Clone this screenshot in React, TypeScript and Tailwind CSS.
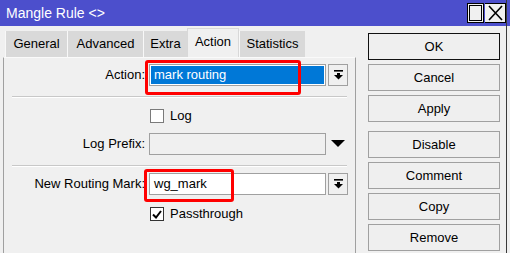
import React from "react";

const DropIcon = () => (
  <svg width="9" height="10" viewBox="0 0 9 10">
    <rect x="0" y="0" width="9" height="1.6" fill="#000" />
    <rect x="3" y="3" width="3" height="2" fill="#000" />
    <polygon points="0,5 9,5 4.5,9.5" fill="#000" />
  </svg>
);

const DropBtn = () => (
  <div className="w-[20px] h-[22px] ml-[2px] border border-[#a0a0a0] bg-[#f0f0f0] flex items-center justify-center">
    <DropIcon />
  </div>
);

const Tab = ({ label, w, active }: { label: string; w: number; active?: boolean }) => (
  <div
    style={{ width: w }}
    className={
      active
        ? "h-[29px] bg-[#f0f0f0] border-t border-l border-r border-[#d8d8d8] flex items-center justify-center pb-[2px]"
        : "h-[26px] bg-[#d9d9d9] border-l border-[#f8f8f8] flex items-center justify-center"
    }
  >
    {label}
  </div>
);

const Btn = ({ label, primary, mt }: { label: string; primary?: boolean; mt?: string }) => (
  <div
    className={
      "h-[27px] w-[132px] flex items-center justify-center bg-[#efefef] " +
      (primary ? "border border-[#111]" : "border border-[#a0a0a0]") +
      (mt ? " " + mt : "")
    }
  >
    {label}
  </div>
);

export default function App() {
  return (
    <div
      className="relative w-[510px] h-[253px] overflow-hidden bg-[#f0f0f0] text-[13px] text-black"
      style={{ fontFamily: '"Liberation Sans", Arial, sans-serif' }}
    >
      {/* title bar */}
      <div className="h-[26px] bg-[#4c4fcc] flex items-center pl-[6px] pr-[4px]">
        <span className="text-white text-[14px] leading-none">Mangle Rule &lt;&gt;</span>
        <div className="ml-auto flex mr-[0px]">
          <div className="w-[17px] h-[20px] bg-[#f0f0f0] border border-black flex items-center justify-center">
            <div className="w-[13px] h-[16px] border border-black" />
          </div>
          <div className="w-[21px] h-[20px] bg-[#f0f0f0] border border-black border-l-0 ml-[1px] flex items-center justify-center">
            <svg width="15" height="16" viewBox="0 0 15 16">
              <path d="M1 1 L14 15 M14 1 L1 15" stroke="#000" strokeWidth="1.6" />
            </svg>
          </div>
        </div>
      </div>

      <div className="flex">
        {/* left */}
        <div className="ml-[3px] w-[353px] flex flex-col">
          <div className="h-[31px] flex items-end pl-[2px]">
            <Tab label="General" w={62} />
            <Tab label="Advanced" w={76} />
            <Tab label="Extra" w={44} />
            <Tab label="Action" w={52} active />
            <Tab label="Statistics" w={66} />
          </div>
          <div className="h-[200px] border-l border-r border-t border-l-[#a0a0a0] border-r-[#a0a0a0] border-t-[#fafafa] flex flex-col">
            {/* Action */}
            <div className="flex items-center mt-[6px] h-[22px]">
              <div className="w-[141px] text-right">Action:</div>
              <div className="ml-[4px] w-[177px] h-[22px] border border-[#a0a0a0] bg-white p-[1px]">
                <div className="w-full h-full bg-[#0078d7] text-white pl-[3px] flex items-center">mark routing</div>
              </div>
              <DropBtn />
            </div>
            <div className="mt-[10px] mx-[8px] h-[2px] border-t border-[#c8c8c8] border-b border-b-white" />
            {/* Log */}
            <div className="flex items-center mt-[11px] h-[14px]">
              <div className="w-[146px]" />
              <div className="w-[14px] h-[14px] border border-[#7a7a7a] bg-white" />
              <span className="ml-[6px]">Log</span>
            </div>
            {/* Log prefix */}
            <div className="flex items-center mt-[10px] h-[22px]">
              <div className="w-[141px] text-right">Log Prefix:</div>
              <div className="ml-[4px] w-[177px] h-[22px] border border-[#a0a0a0] bg-[#f0f0f0]" />
              <div className="w-[20px] ml-[2px] flex items-center justify-center">
                <svg width="14" height="8" viewBox="0 0 14 8">
                  <polygon points="0,0 14,0 7,7" fill="#000" />
                </svg>
              </div>
            </div>
            <div className="mt-[10px] mx-[8px] h-[2px] border-t border-[#c8c8c8] border-b border-b-white" />
            {/* New routing mark */}
            <div className="flex items-center mt-[6px] h-[22px]">
              <div className="w-[141px] text-right">New Routing Mark:</div>
              <div className="ml-[4px] w-[177px] h-[22px] border border-[#a0a0a0] bg-white pl-[4px] flex items-center">
                wg_mark
              </div>
              <DropBtn />
            </div>
            {/* Passthrough */}
            <div className="flex items-center mt-[12px] h-[14px]">
              <div className="w-[146px]" />
              <div className="w-[14px] h-[14px] border border-[#333] bg-white flex items-center justify-center">
                <svg width="10" height="9" viewBox="0 0 10 9">
                  <path d="M1 4.5 L4 7.5 L9 1" stroke="#000" strokeWidth="2" fill="none" />
                </svg>
              </div>
              <span className="ml-[6px]">Passthrough</span>
            </div>
          </div>
        </div>

        {/* right buttons */}
        <div className="ml-[12px] pt-[7px] flex flex-col gap-[4px]">
          <Btn label="OK" primary />
          <Btn label="Cancel" />
          <Btn label="Apply" />
          <Btn label="Disable" mt="mt-[5px]" />
          <Btn label="Comment" />
          <Btn label="Copy" />
          <Btn label="Remove" />
        </div>
      </div>

      {/* window right border */}
      <div className="absolute right-[3px] top-0 h-full w-[1px] bg-[#3a3a3a]" />

      {/* red annotation boxes */}
      <div className="absolute left-[145px] top-[60px] w-[156px] h-[35px] border-[3px] border-[#ff0000] rounded-[3px]" />
      <div className="absolute left-[144px] top-[169px] w-[90px] h-[33px] border-[3px] border-[#ff0000] rounded-[3px]" />
    </div>
  );
}
